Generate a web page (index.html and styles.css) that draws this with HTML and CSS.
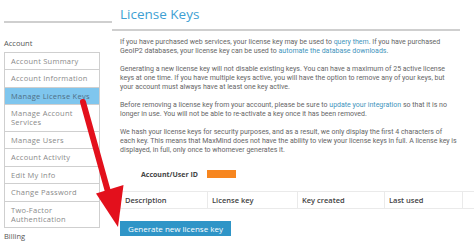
FILE: index.html
```html
<!DOCTYPE html>
<html>
<head>
<meta charset="utf-8">
<link rel="stylesheet" href="styles.css">
</head>
<body>
<div class="page">
  <aside class="side">
    <div class="side-rule"></div>
    <div class="side-label">Account</div>
    <ul class="nav">
      <li>Account Summary</li>
      <li>Account Information</li>
      <li class="active">Manage License Keys</li>
      <li>Manage Account Services</li>
      <li>Manage Users</li>
      <li>Account Activity</li>
      <li>Edit My Info</li>
      <li>Change Password</li>
      <li>Two-Factor Authentication</li>
    </ul>
    <div class="side-label billing">Billing</div>
  </aside>
  <main class="main">
    <h1 class="title">License Keys</h1>
    <div class="content">
      <p>If you have purchased web services, your license key may be used to <a>query them</a>. If you have purchased GeoIP2 databases, your license key can be used to <a>automate the database downloads</a>.</p>
      <p>Generating a new license key will not disable existing keys. You can have a maximum of 25 active license keys at one time. If you have multiple keys active, you will have the option to remove any of your keys, but your account must always have at least one key active.</p>
      <p>Before removing a license key from your account, please be sure to <a>update your integration</a> so that it is no longer in use. You will not be able to re-activate a key once it has been removed.</p>
      <p>We hash your license keys for security purposes, and as a result, we only display the first 4 characters of each key. This means that MaxMind does not have the ability to view your license keys in full. A license key is displayed, in full, only once to whomever generates it.</p>
      <div class="account-row">
        <span class="account-label">Account/User ID</span>
        <span class="account-id"></span>
      </div>
      <table class="keys">
        <thead>
          <tr>
            <th class="c1">Description</th>
            <th class="c2">License key</th>
            <th class="c3">Key created</th>
            <th class="c4">Last used</th>
            <th class="c5"></th>
          </tr>
        </thead>
      </table>
      <button class="btn">Generate new license key</button>
    </div>
  </main>
  <svg class="arrow" width="474" height="244" viewBox="0 0 474 244">
    <line x1="83" y1="102" x2="107.5" y2="190" stroke="#e3101c" stroke-width="6" stroke-linecap="round"/>
    <polygon points="96,193.5 123.5,185 118,227" fill="#e3101c"/>
  </svg>
</div>
</body>
</html>
```
FILE: styles.css
```css
html, body {
  margin: 0;
  padding: 0;
  background: #fff;
}
.page {
  position: relative;
  width: 474px;
  height: 244px;
  overflow: hidden;
  display: flex;
  font-family: Roboto, "Liberation Sans", sans-serif;
}
.side {
  width: 112px;
  padding-left: 4px;
  box-sizing: border-box;
  flex: none;
  font-family: "Open Sans", "DejaVu Sans", sans-serif;
}
.side-rule {
  margin-top: 21px;
  height: 2px;
  background: #cfcfcf;
}
.side-label {
  margin-top: 15px;
  font-size: 7.5px;
  line-height: 10px;
  color: #555;
}
.side-label.billing {
  margin-top: 3px;
}
.nav {
  list-style: none;
  margin: 4px 0 0 0;
  padding: 0;
  width: 94px;
  border: 1px solid #cfcfcf;
  border-bottom: none;
}
.nav li {
  font-size: 7.5px;
  letter-spacing: 0.25px;
  line-height: 9px;
  padding: 3.8px 8px 3.7px 6px;
  color: #8a8a8a;
  border-bottom: 1px solid #cfcfcf;
}
.nav li.active {
  background: #7fc6ee;
  color: #4f6f86;
}
.main {
  width: 348px;
  flex: none;
}
.title {
  margin: 0;
  padding: 4px 0 5px 8px;
  font-family: "Open Sans", "DejaVu Sans", sans-serif;
  font-weight: 500;
  font-size: 13.5px;
  line-height: 20px;
  color: #3e9fd3;
  border-bottom: 2px solid #cfcfcf;
}
.content {
  padding: 0 2px 0 8px;
}
.content p {
  margin: 6.5px 0 9px 0;
  font-size: 7px;
  line-height: 9px;
  color: #666;
}
.content p + p {
  margin-top: 0;
}
.content a {
  color: #3f95bd;
}
.account-row {
  display: flex;
  align-items: center;
  margin-top: 15px;
  padding-left: 21px;
  height: 9px;
}
.account-label {
  font-family: "Open Sans", "DejaVu Sans", sans-serif;
  font-size: 7px;
  font-weight: 700;
  color: #444;
}
.account-id {
  margin-left: 9px;
  width: 29px;
  height: 8px;
  background: #f7861f;
}
.keys {
  margin-top: 12px;
  width: 339px;
  border-collapse: collapse;
  table-layout: fixed;
}
.keys th {
  height: 16px;
  padding: 0 0 0 4px;
  text-align: left;
  font-family: "Open Sans", "DejaVu Sans", sans-serif;
  font-size: 7.5px;
  font-weight: 600;
  color: #3f3f3f;
  border: 1px solid #eaeaea;
}
.keys .c1 { width: 82px; }
.keys .c2 { width: 85px; }
.keys .c3 { width: 82px; }
.keys .c4 { width: 73px; }
.keys .c5 { width: 17px; }
.btn {
  display: block;
  margin-top: 12px;
  width: 111px;
  height: 15px;
  padding: 0;
  border: none;
  background: #2f95c7;
  color: #fff;
  font-family: "Open Sans", "DejaVu Sans", sans-serif;
  font-size: 8px;
  font-weight: 500;
}
.arrow {
  position: absolute;
  left: 0;
  top: 0;
  pointer-events: none;
}
```
